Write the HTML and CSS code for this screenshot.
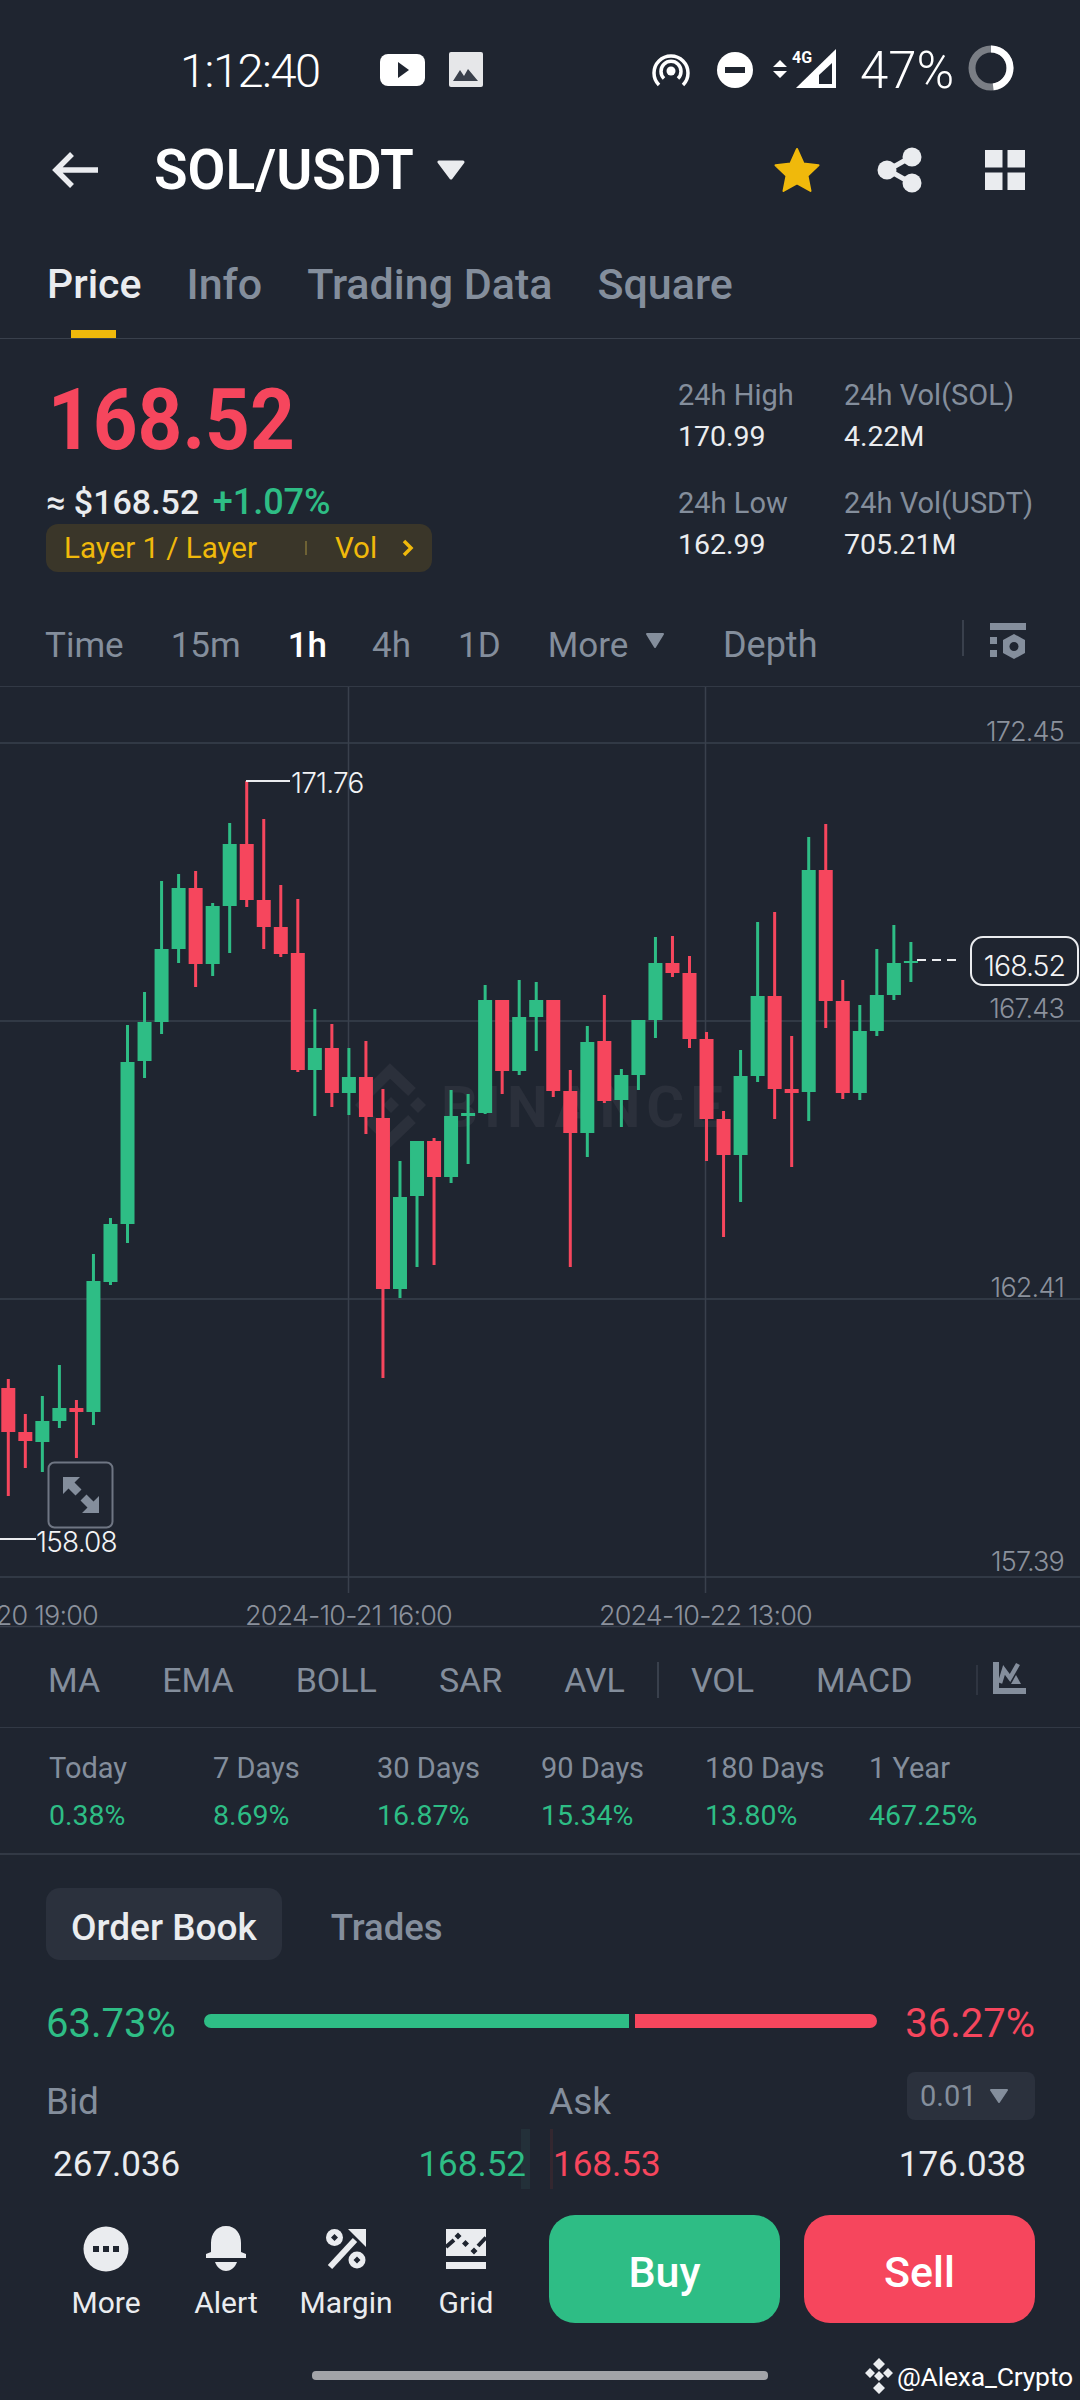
FILE: index.html
```html
<!DOCTYPE html>
<html lang="en">
<head>
    <meta charset="UTF-8">
    <meta name="viewport" content="width=device-width, initial-scale=1.0">
    <title>SOL/USDT</title>
    <link rel="stylesheet" href="styles.css">
</head>
<body>
    <div class="screen">
        <!-- status bar -->
        <div class="status-bar">
            <span class="clock">1:12:40</span>
            <svg class="status-apps" width="104" height="36" viewBox="0 0 104 36">
                <rect x="0" y="2" width="45" height="32" rx="8" fill="#fff"/>
                <path d="M18 10l11 8-11 8z" fill="#1f2530"/>
                <rect x="69" y="0" width="34" height="35" rx="2" fill="#e6e7e9"/>
                <path d="M73 29l7-11 4 6 4-7 10 12z" fill="#3a404b"/>
            </svg>
            <svg class="status-net" width="186" height="44" viewBox="0 0 186 44">
                <g fill="none" stroke="#fff" stroke-width="3.5">
                    <path d="M8 39a17 17 0 1 1 24 0"/>
                    <path d="M13 32.500a10 10 0 1 1 14 0"/>
                </g>
                <circle cx="20" cy="25" r="4.500" fill="#fff"/>
                <circle cx="84" cy="24" r="18" fill="#fff"/>
                <rect x="74" y="21" width="20" height="6" fill="#1f2530"/>
                <path d="M129 14l7 7h-14zM129 32l7-7h-14z" fill="#fff"/>
                <text class="net-type" x="141" y="17">4G</text>
                <path d="M185 3v39h-40z" fill="#fff"/>
                <path d="M168 38v-9l13-12v21z" fill="#1f2530"/>
            </svg>
            <span class="battery-text">47%</span>
            <svg class="battery" width="46" height="46" viewBox="0 0 46 46">
                <circle cx="23" cy="23" r="19" fill="none" stroke="#7a7e85" stroke-width="7"/>
                <circle class="battery-fill" cx="23" cy="23" r="19" fill="none" stroke="#fff" stroke-width="7" stroke-dasharray="57 120"/>
            </svg>
        </div>

        <!-- pair header -->
        <div class="top-bar">
            <svg class="back-icon" width="46" height="36" viewBox="0 0 46 36">
                <path d="M46 18H5M20 2L4 18l16 16" fill="none" stroke="#eaecef" stroke-width="5.500"/>
            </svg>
            <span class="pair">SOL/USDT</span>
            <svg class="pair-caret" width="30" height="20" viewBox="0 0 30 20">
                <path d="M3 2h24L15 18z" fill="#eaecef" stroke="#eaecef" stroke-width="3" stroke-linejoin="round"/>
            </svg>
            <div class="top-actions">
                <svg width="48" height="48" viewBox="0 0 48 48">
                    <path d="M24 3l6.500 14.500 15 1.800-11 10.500 3 15.200L24 37.500 10.500 45l3-15.200-11-10.500 15-1.800z" fill="#f0b90b" stroke="#f0b90b" stroke-width="2" stroke-linejoin="round"/>
                </svg>
                <svg width="46" height="46" viewBox="0 0 46 46">
                    <path d="M34 10L11 23l23 13" fill="none" stroke="#eaecef" stroke-width="5"/>
                    <circle cx="35" cy="10" r="9.500" fill="#eaecef"/>
                    <circle cx="10" cy="23" r="9.500" fill="#eaecef"/>
                    <circle cx="35" cy="36" r="9.500" fill="#eaecef"/>
                </svg>
                <svg class="apps-icon" width="40" height="40" viewBox="0 0 40 40">
                    <path d="M0 0h17.500v17.500H0zM22.500 0H40v17.500H22.500zM0 22.500h17.500V40H0zM22.500 22.500H40V40H22.500z" fill="#eaecef"/>
                </svg>
            </div>
        </div>

        <div class="tabs">
            <span class="tab active">Price</span>
            <span class="tab">Info</span>
            <span class="tab">Trading Data</span>
            <span class="tab">Square</span>
        </div>

        <!-- ticker -->
        <div class="ticker">
            <div class="ticker-main">
                <div class="last-price">168.52</div>
                <div class="fiat-line">≈ $168.52 <span class="up fiat-change">+1.07%</span></div>
                <div class="sector-tag">
                    <span>Layer 1 / Layer</span>
                    <i class="tag-sep"></i>
                    <span>Vol</span>
                    <svg width="12" height="18" viewBox="0 0 12 18">
                        <path d="M2 2l7 7-7 7" fill="none" stroke="#f0b90b" stroke-width="3.500"/>
                    </svg>
                </div>
            </div>
            <div class="ticker-stats">
                <div class="stat">
                    <div class="stat-label">24h High</div>
                    <div class="stat-value">170.99</div>
                </div>
                <div class="stat">
                    <div class="stat-label">24h Vol(SOL)</div>
                    <div class="stat-value">4.22M</div>
                </div>
                <div class="stat">
                    <div class="stat-label">24h Low</div>
                    <div class="stat-value">162.99</div>
                </div>
                <div class="stat">
                    <div class="stat-label">24h Vol(USDT)</div>
                    <div class="stat-value">705.21M</div>
                </div>
            </div>
        </div>

        <!-- intervals -->
        <div class="intervals">
            <span class="int">Time</span>
            <span class="int">15m</span>
            <span class="int active">1h</span>
            <span class="int">4h</span>
            <span class="int">1D</span>
            <span class="int int-more">More
                <svg width="20" height="16" viewBox="0 0 20 16">
                    <path d="M2 1h16L10 14z" fill="#848e9c" stroke="#848e9c" stroke-width="2" stroke-linejoin="round"/>
                </svg>
            </span>
            <span class="int int-depth">Depth</span>
            <i class="int-sep"></i>
            <svg class="int-settings" width="36" height="36" viewBox="0 0 36 36">
                <path d="M0 0h36v7H0zM0 14h7v7H0zM0 27h7v7H0z" fill="#848e9c"/>
                <path d="M24 11l11 6v13l-11 6-11-6V17z" fill="#848e9c"/>
                <circle cx="24" cy="23.500" r="4.500" fill="#1f2530"/>
            </svg>
        </div>

        <!-- chart, svg user units are page pixels -->
        <svg class="chart" width="1080" height="940" viewBox="0 687 1080 940">
            <g class="grid-lines">
                <path d="M0 743H1080M0 1021H1080M0 1299H1080M0 1577H1080M0 1626.500H1080"/>
                <path d="M348.500 687V1593M705.500 687V1593"/>
            </g>
            <g class="watermark">
                <path class="logo-stroke" d="M369 1092l21-21 22 21M369 1119l21 21 22-21"/>
                <path d="M363 1097l8 8-8 8-8-8zM391 1097l8 8-8 8-8-8zM418 1097l8 8-8 8-8-8z"/>
                <text x="441" y="1127">BINANCE</text>
            </g>
            <g id="candles"></g>
            <g class="price-axis">
                <text x="1064" y="741">172.45</text>
                <text x="1064" y="1018">167.43</text>
                <text x="1064" y="1297">162.41</text>
                <text x="1064" y="1571">157.39</text>
            </g>
            <g class="date-axis">
                <text x="98" y="1625">20 19:00</text>
                <text x="452" y="1625">2024-10-21 16:00</text>
                <text x="812" y="1625">2024-10-22 13:00</text>
            </g>
            <g class="marks">
                <path d="M246 781H290M0 1539H36"/>
                <text x="291" y="793">171.76</text>
                <text x="36" y="1552">158.08</text>
            </g>
            <path class="last-line" d="M917 960H960"/>
            <rect class="last-box" x="971" y="937" width="107" height="48" rx="12"/>
            <text class="last-text" x="1065" y="976" text-anchor="end">168.52</text>
            <rect class="expand-box" x="48.500" y="1462.500" width="64" height="65" rx="6"/>
            <path class="expand-arrows" d="M63 1477h17l-5.500 5.500 7 7-6 6-7-7L63 1494zM99 1513H82l5.500-5.500-7-7 6-6 7 7 5.500-5.500z"/>
        </svg>

        <!-- indicators -->
        <div class="indicators">
            <span class="ind">MA</span>
            <span class="ind">EMA</span>
            <span class="ind">BOLL</span>
            <span class="ind">SAR</span>
            <span class="ind">AVL</span>
            <i class="ind-sep"></i>
            <span class="ind">VOL</span>
            <span class="ind">MACD</span>
            <i class="ind-sep-faint"></i>
            <svg class="ind-icon" width="33" height="32" viewBox="0 0 33 32">
                <path d="M0 0h6v26h27v6H0z" fill="#848e9c"/>
                <path d="M7 21L11 8l6 8 8-14" fill="none" stroke="#848e9c" stroke-width="4.500"/>
                <path d="M23 13l5 9H18z" fill="#848e9c"/>
            </svg>
        </div>

        <div class="returns">
            <div class="ret"><div class="ret-label">Today</div><div class="ret-value">0.38%</div></div>
            <div class="ret"><div class="ret-label">7 Days</div><div class="ret-value">8.69%</div></div>
            <div class="ret"><div class="ret-label">30 Days</div><div class="ret-value">16.87%</div></div>
            <div class="ret"><div class="ret-label">90 Days</div><div class="ret-value">15.34%</div></div>
            <div class="ret"><div class="ret-label">180 Days</div><div class="ret-value">13.80%</div></div>
            <div class="ret"><div class="ret-label">1 Year</div><div class="ret-value">467.25%</div></div>
        </div>

        <!-- order book -->
        <div class="book">
            <div class="book-tabs">
                <span class="book-tab active">Order Book</span>
                <span class="book-tab book-trades">Trades</span>
            </div>
            <div class="ratio">
                <span class="up ratio-text">63.73%</span>
                <div class="ratio-bar">
                    <div class="ratio-buy" style="flex-grow: 63.73"></div>
                    <div class="ratio-sell" style="flex-grow: 36.27"></div>
                </div>
                <span class="down ratio-text">36.27%</span>
            </div>
            <div class="book-head">
                <span class="book-bid">Bid</span>
                <span>Ask</span>
                <div class="tick-size">0.01
                    <svg width="20" height="14" viewBox="0 0 20 14">
                        <path d="M2 1h16L10 13z" fill="#848e9c" stroke="#848e9c" stroke-width="2" stroke-linejoin="round"/>
                    </svg>
                </div>
            </div>
            <div class="book-row">
                <i class="depth depth-bid"></i>
                <i class="depth depth-ask"></i>
                <div class="book-side">
                    <span>267.036</span>
                    <span class="up">168.52</span>
                </div>
                <div class="book-side">
                    <span class="down">168.53</span>
                    <span>176.038</span>
                </div>
            </div>
        </div>

        <!-- actions -->
        <div class="actions">
            <div class="tool">
                <svg width="46" height="46" viewBox="0 0 46 46">
                    <circle cx="23" cy="23" r="22.500" fill="#eaecef"/>
                    <path d="M10 20h6v6h-6zM20 20h6v6h-6zM30 20h6v6h-6z" fill="#1f2530"/>
                </svg>
                <span>More</span>
            </div>
            <div class="tool">
                <svg width="46" height="46" viewBox="0 0 46 46">
                    <path d="M23 0C13 0 8 8 8 17v9l-5 2v4h40v-4l-5-2v-9C38 8 33 0 23 0z" fill="#eaecef"/>
                    <path d="M12 36h22c-2 6-7 9-11 9s-9-3-11-9z" fill="#eaecef"/>
                </svg>
                <span>Alert</span>
            </div>
            <div class="tool">
                <svg width="46" height="46" viewBox="0 0 46 46">
                    <path d="M7 41l25-27" fill="none" stroke="#eaecef" stroke-width="6"/>
                    <path d="M25 3h18v18z" fill="#eaecef"/>
                    <circle cx="11.500" cy="11.500" r="8.500" fill="#eaecef"/>
                    <circle cx="34" cy="34" r="8.500" fill="#eaecef"/>
                    <path d="M11.500 8l3.500 3.500-3.500 3.500L8 11.500zM34 30.500l3.500 3.500-3.500 3.500-3.500-3.500z" fill="#1f2530"/>
                </svg>
                <span>Margin</span>
            </div>
            <div class="tool">
                <svg width="46" height="46" viewBox="0 0 46 46">
                    <path d="M3 3h40v27H3zM3 36h40v7H3z" fill="#eaecef"/>
                    <path d="M3 21l8-7M35 20l8-8.500" fill="none" stroke="#1f2530" stroke-width="4"/>
                    <path d="M15 6.500l3.500 3.500-3.500 3.500-3.500-3.500zM22.500 14l3.500 3.500-3.500 3.500-3.500-3.500zM31 21.500l3.500 3.500-3.500 3.500-3.500-3.500z" fill="#1f2530"/>
                </svg>
                <span>Grid</span>
            </div>
            <div class="trade-btn buy">Buy</div>
            <div class="trade-btn sell">Sell</div>
        </div>

        <div class="home-bar"></div>

        <div class="signature">
            <svg width="28" height="36" viewBox="0 0 28 36">
                <path d="M14 0l6 6-6 6-6-6zM5 10l5 5-5 5-5-5zM23 10l5 5-5 5-5-5zM14 24l6 6-6 6-6-6zM14 13l5 5-5 5-5-5z" fill="#eaecef"/>
            </svg>
            <span>@Alexa_Crypto</span>
        </div>
    </div>

    <script src="chart.js"></script>
</body>
</html>
```

FILE: styles.css
```css
* {
    box-sizing: border-box;
}
body {
    margin: 0;
    background: #1f2530;
    font-family: Roboto, "Noto Sans", sans-serif;
    color: #eaecef;
}
i {
    display: block;
}
.screen {
    position: relative;
    width: 1080px;
    height: 2400px;
    overflow: hidden;
    background: #1f2530;
}
.up {
    color: #2ebd85;
}
.down {
    color: #f6465d;
}

/* status bar */
.status-bar {
    display: flex;
    align-items: center;
    height: 140px;
    padding-left: 180px;
}
.clock {
    width: 200px;
    font-size: 47px;
    font-weight: 300;
    letter-spacing: -1.5px;
    color: #fff;
}
.status-net {
    margin: -4px 0 0 167px;
}
.net-type {
    font-size: 16px;
    font-weight: 700;
    fill: #fff;
}
.battery-text {
    width: 108px;
    margin-left: 23px;
    font-size: 51px;
    font-weight: 300;
    color: #fff;
}
.battery {
    margin-top: -4px;
}
.battery-fill {
    transform: rotate(-90deg);
    transform-origin: 23px 23px;
}

/* pair header */
.top-bar {
    display: flex;
    align-items: center;
    height: 60px;
    padding-left: 52px;
}
.back-icon {
    margin-right: 56px;
}
.pair {
    font-size: 55px;
    font-weight: 600;
    color: #fff;
}
.pair-caret {
    margin-left: 22px;
}
.top-actions {
    display: flex;
    align-items: center;
    gap: 56px;
    margin-left: auto;
    padding-right: 55px;
}
.apps-icon {
    margin-left: 6px;
}

.tabs {
    display: flex;
    gap: 45px;
    height: 139px;
    align-items: flex-end;
    padding-left: 47px;
    border-bottom: 1px solid #39404c;
}
.tab {
    position: relative;
    padding-bottom: 29px;
    font-size: 43px;
    line-height: 50px;
    font-weight: 500;
    color: #848e9c;
}
.tab.active {
    font-size: 41px;
    color: #eaecef;
}
.tab.active::after {
    content: "";
    position: absolute;
    left: 24px;
    bottom: 0;
    width: 45px;
    height: 8px;
    background: #f0b90b;
}

/* ticker */
.ticker {
    display: flex;
    height: 251px;
}
.ticker-main {
    width: 678px;
    padding: 36px 0 0 46px;
}
.last-price {
    padding-left: 2px;
    font-size: 85px;
    line-height: 90px;
    font-weight: 700;
    color: #f6465d;
    transform: scaleX(0.92);
    transform-origin: left;
}
.fiat-line {
    margin-top: 17px;
    font-size: 34px;
    line-height: 40px;
    font-weight: 500;
    color: #eaecef;
}
.fiat-change {
    margin-left: 5px;
    font-size: 36px;
}
.sector-tag {
    display: flex;
    align-items: center;
    width: 386px;
    height: 48px;
    margin-top: 2px;
    padding-left: 18px;
    border-radius: 12px;
    background: #3a3629;
    font-size: 29.5px;
    color: #f0b90b;
}
.tag-sep {
    width: 2px;
    height: 14px;
    margin: 0 28px 0 48px;
    background: #6e6234;
}
.sector-tag svg {
    margin-left: 25px;
}
.ticker-stats {
    display: grid;
    grid-template-columns: 166px 1fr;
    row-gap: 30px;
    align-content: start;
    padding-top: 38px;
}
.stat-label {
    font-size: 29px;
    line-height: 36px;
    color: #848e9c;
}
.stat-value {
    margin-top: 6px;
    font-size: 28.5px;
    line-height: 36px;
    color: #eaecef;
}

/* intervals */
.intervals {
    display: flex;
    align-items: center;
    height: 97px;
    padding: 14px 0 0 45px;
    border-bottom: 1px solid #323945;
}
.int {
    margin-right: 47px;
    font-size: 35px;
    color: #848e9c;
}
.int.active {
    margin-right: 45px;
    font-weight: 500;
    color: #fff;
}
.int-more svg {
    margin-left: 8px;
    vertical-align: 8px;
}
.int-more {
    margin-right: 58px;
}
.int-depth {
    margin-right: 145px;
    font-size: 36px;
}
.int-sep {
    width: 2px;
    height: 36px;
    margin-top: -14px;
    background: #39404c;
}
.int-settings {
    margin: -8px 0 0 26px;
}

/* chart */
.chart {
    display: block;
    overflow: visible;
}
.grid-lines path {
    fill: none;
    stroke: #39404c;
    stroke-width: 1.5;
}
.watermark path {
    fill: #2b303b;
}
.watermark .logo-stroke {
    fill: none;
    stroke: #2b303b;
    stroke-width: 11;
}
.watermark text {
    font-family: Roboto, sans-serif;
    font-size: 58px;
    font-weight: 700;
    letter-spacing: 6px;
    fill: #2b303b;
}
.price-axis text,
.date-axis text {
    font-family: Inter, sans-serif;
    font-size: 27px;
    font-weight: 300;
    letter-spacing: -0.8px;
    fill: #8b919c;
    text-anchor: end;
}
.marks path {
    fill: none;
    stroke: #eaecef;
    stroke-width: 2;
}
.marks text {
    font-family: Inter, sans-serif;
    font-size: 28px;
    font-weight: 300;
    letter-spacing: -0.8px;
    fill: #f2f3f5;
}
.last-text {
    font-family: Inter, sans-serif;
    font-size: 28.5px;
    font-weight: 300;
    letter-spacing: -1px;
    fill: #f2f3f5;
}
.last-line {
    stroke: #eaecef;
    stroke-width: 2;
    stroke-dasharray: 9 6;
}
.last-box {
    fill: #1f2530;
    stroke: #eaecef;
    stroke-width: 2;
}
.expand-box {
    fill: #1f2530;
    stroke: #6f7683;
    stroke-width: 2;
}
.expand-arrows {
    fill: #848e9c;
}

/* indicators */
.indicators {
    display: flex;
    align-items: center;
    height: 101px;
    padding: 6px 0 0 48px;
    border-bottom: 1px solid #323945;
}
.ind {
    margin-right: 62px;
    font-size: 34px;
    color: #848e9c;
}
.ind-sep {
    width: 2px;
    height: 36px;
    margin: 0 32px 0 -30px;
    background: #39404c;
}
.ind-sep-faint {
    width: 2px;
    height: 30px;
    margin-left: 2px;
    background: #2f3541;
}
.ind-icon {
    margin: -4px 0 0 15px;
}

.returns {
    display: grid;
    grid-template-columns: repeat(6, 164px);
    height: 127px;
    padding: 22px 0 0 49px;
    border-bottom: 2px solid #323945;
}
.ret-label {
    font-size: 29px;
    line-height: 36px;
    color: #848e9c;
}
.ret-value {
    margin-top: 12px;
    font-size: 28.5px;
    line-height: 36px;
    color: #2ebd85;
}

/* order book */
.book {
    padding: 33px 45px 0 46px;
}
.book-tabs {
    display: flex;
    align-items: center;
    gap: 24px;
}
.book-tab {
    height: 72px;
    padding: 0 25px;
    font-size: 37px;
    line-height: 80px;
    font-weight: 500;
    color: #848e9c;
}
.book-trades {
    font-size: 36.5px;
}
.book-tab.active {
    border-radius: 14px;
    background: #2b313d;
    color: #eaecef;
}
.ratio {
    display: flex;
    align-items: center;
    justify-content: space-between;
    height: 50px;
    margin-top: 36px;
    font-size: 40px;
}
.ratio-text {
    padding-top: 4px;
}
.ratio-bar {
    display: flex;
    gap: 6px;
    width: 673px;
    height: 14px;
}
.ratio-buy {
    flex-basis: 0;
    border-radius: 7px 0 0 7px;
    background: #2ebd85;
}
.ratio-sell {
    flex-basis: 0;
    border-radius: 0 7px 7px 0;
    background: #f6465d;
}
.book-head {
    display: flex;
    align-items: center;
    height: 48px;
    margin-top: 26px;
    font-size: 37px;
    color: #848e9c;
}
.book-bid {
    width: 503px;
}
.book-head > span {
    padding-top: 10px;
}
.tick-size {
    display: flex;
    align-items: center;
    justify-content: space-between;
    width: 128px;
    height: 48px;
    margin-left: auto;
    padding: 0 26px 0 13px;
    border-radius: 8px;
    background: #2b313d;
    font-size: 29px;
}
.book-row {
    position: relative;
    display: flex;
    gap: 27px;
    height: 40px;
    margin-top: 25px;
    padding: 0 9px 0 7px;
    font-size: 35px;
    line-height: 40px;
}
.book-side {
    position: relative;
    display: flex;
    justify-content: space-between;
    width: 473px;
}
.depth {
    position: absolute;
    top: -16px;
    height: 60px;
}
.depth-bid {
    left: 475px;
    width: 9px;
    background: #233039;
}
.depth-ask {
    left: 504px;
    width: 3px;
    background: #33272f;
}

/* actions */
.actions {
    display: flex;
    margin-top: 30px;
    padding-left: 46px;
}
.tool {
    display: flex;
    flex-direction: column;
    align-items: center;
    width: 120px;
    padding-top: 11px;
    font-size: 30px;
}
.tool span {
    margin-top: 13px;
    line-height: 36px;
}
.trade-btn {
    width: 231px;
    height: 108px;
    border-radius: 26px;
    font-size: 43px;
    line-height: 114px;
    font-weight: 500;
    text-align: center;
    color: #fff;
}
.buy {
    margin-left: 23px;
    background: #2ebd85;
}
.sell {
    margin-left: 24px;
    background: #f6465d;
}
.home-bar {
    width: 456px;
    height: 9px;
    margin: 48px auto 0;
    border-radius: 4px;
    background: #a2a4a8;
}
.signature {
    position: absolute;
    left: 865px;
    top: 2358px;
    display: flex;
    align-items: center;
    gap: 4px;
    font-size: 26.5px;
    letter-spacing: -0.2px;
    color: #fff;
}
```

FILE: chart.js
```js
// one row per hour: up?, high, open/close top, open/close bottom, low
const candles = [
    [0, 1379, 1388, 1432, 1496], [0, 1414, 1432, 1441, 1468], [1, 1396, 1421, 1442, 1472],
    [1, 1365, 1408, 1421, 1428], [0, 1400, 1408, 1412, 1458], [1, 1254, 1281, 1412, 1425],
    [1, 1218, 1224, 1282, 1285], [1, 1025, 1062, 1224, 1243], [1, 992, 1022, 1061, 1078],
    [1, 881, 949, 1022, 1034], [1, 874, 888, 949, 963], [0, 871, 888, 964, 987],
    [1, 903, 906, 964, 976], [1, 823, 844, 906, 953], [0, 781, 844, 900, 907],
    [0, 819, 900, 927, 949], [0, 885, 927, 954, 957], [0, 899, 953, 1070, 1072],
    [1, 1009, 1048, 1070, 1116], [0, 1024, 1048, 1093, 1107], [1, 1048, 1077, 1093, 1115],
    [0, 1041, 1077, 1117, 1134], [0, 1089, 1118, 1289, 1378], [1, 1161, 1197, 1289, 1298],
    [1, 1141, 1141, 1196, 1267], [0, 1138, 1141, 1177, 1265], [1, 1090, 1116, 1177, 1183],
    [1, 1094, 1113, 1116, 1164], [1, 985, 1000, 1113, 1114], [0, 1000, 1000, 1071, 1094],
    [1, 980, 1017, 1071, 1075], [1, 982, 1000, 1017, 1051], [0, 1000, 1000, 1091, 1097],
    [0, 1070, 1091, 1133, 1267], [1, 1026, 1042, 1133, 1157], [0, 995, 1041, 1101, 1103],
    [1, 1069, 1075, 1100, 1127], [1, 1020, 1020, 1075, 1090], [1, 937, 963, 1020, 1038],
    [0, 936, 963, 973, 977], [0, 956, 973, 1039, 1048], [0, 1032, 1039, 1119, 1161],
    [0, 1111, 1119, 1155, 1237], [1, 1050, 1076, 1155, 1202], [1, 922, 996, 1076, 1082],
    [0, 912, 996, 1089, 1119], [0, 1036, 1089, 1093, 1167], [1, 837, 870, 1092, 1121],
    [0, 824, 870, 1001, 1028], [0, 980, 1001, 1093, 1099], [1, 1005, 1031, 1093, 1100],
    [1, 949, 995, 1031, 1036], [1, 925, 963, 995, 1000], [1, 942, 961, 963, 982]
];

const svgNs = 'http://www.w3.org/2000/svg';
const group = document.getElementById('candles');

function addRect(x, y, width, height, fill) {
    const rect = document.createElementNS(svgNs, 'rect');
    rect.setAttribute('x', x);
    rect.setAttribute('y', y);
    rect.setAttribute('width', width);
    rect.setAttribute('height', height);
    rect.setAttribute('fill', fill);
    group.appendChild(rect);
}

candles.forEach(([up, high, top, bottom, low], i) => {
    const center = 8.3 + i * 17.03;
    const color = up ? '#2ebd85' : '#f6465d';
    addRect(center - 1.5, high, 3, low - high, color);
    addRect(center - 7, top, 14, bottom - top, color);
});
```
